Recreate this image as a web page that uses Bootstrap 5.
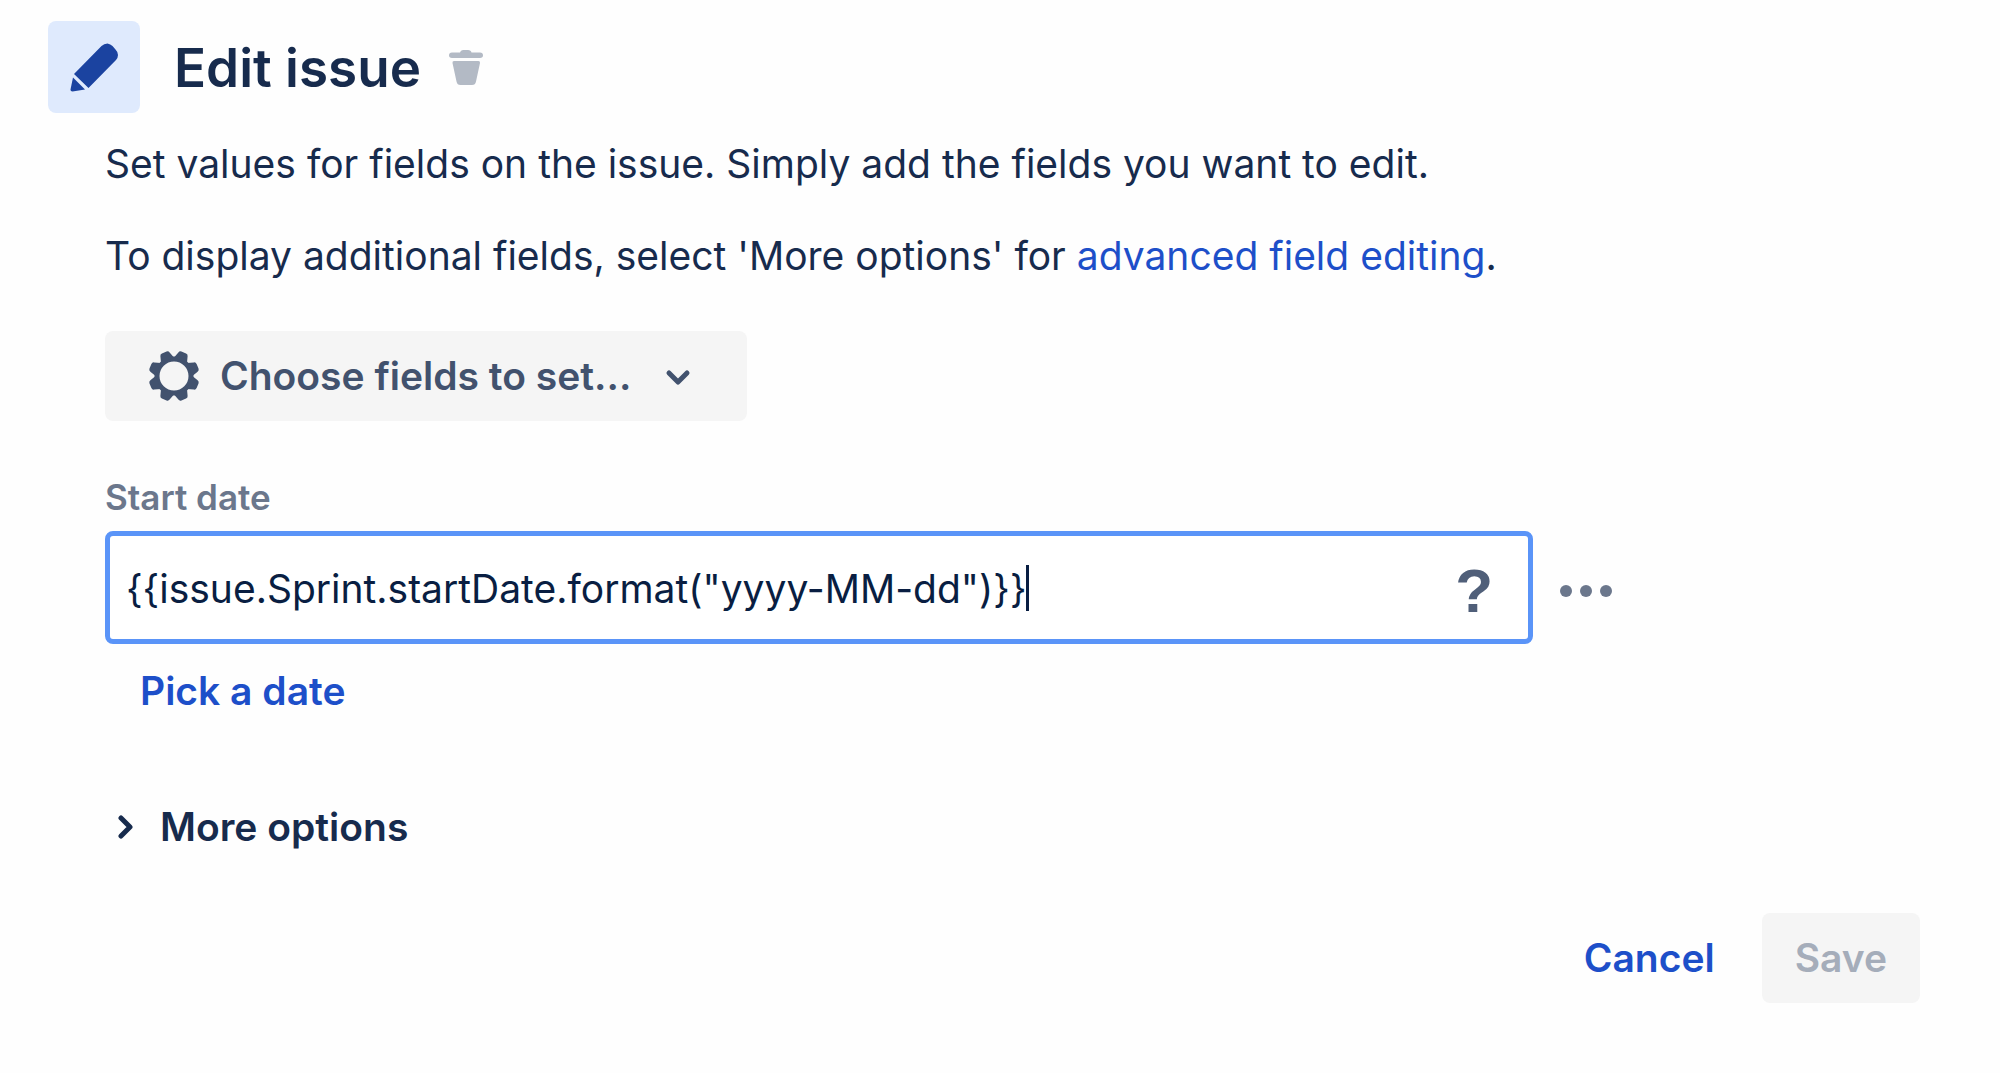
<!DOCTYPE html>
<html lang="en">
<head>
<meta charset="utf-8">
<meta name="viewport" content="width=device-width, initial-scale=1">
<title>Edit issue</title>
<link href="https://cdn.jsdelivr.net/npm/bootstrap@5.3.0/dist/css/bootstrap.min.css" rel="stylesheet">
<style>
  body { font-family: Inter, "Liberation Sans", sans-serif; font-size: 39px; line-height: 52px; color: #172b4d; background: #fefefe; }
  .panel { padding: 21px 80px 40px 48px; }
  .tile { width: 92px; height: 92px; border-radius: 8px; background: #dfeafd; }
  .title { font-size: 53px; line-height: 64px; font-weight: 600; margin: 2px 27px 0 34px; }
  .panel-body { padding: 25px 0 0 57px; }
  .panel-body p { margin-bottom: 40px; }
  a, .link-btn { color: #1d4fc9; text-decoration: none; }
  .btn { font-size: 39px; line-height: 52px; border: 0; border-radius: 8px; font-weight: 600; }
  .btn-soft, .btn-soft:disabled { background: #f5f5f5; color: #42526e; }
  .btn-soft:disabled { color: #a5adba; opacity: 1; }
  .choose { padding: 19px 56px 19px 43px; margin-top: 9px; }
  .choose-text { margin: 0 34px 0 20px; }
  .field-label { font-size: 35px; line-height: 40px; font-weight: 600; color: #6b778c; margin: 56px 0 14px; }
  .field-row { gap: 24px; padding-right: 305px; }
  .field-box { height: 113px; border: 5px solid #5a94f8; border-radius: 8px; padding: 0 35px 0 16px; background: #fff; }
  .field-input { width: 900px; min-width: 0; border: 0; outline: 0; padding: 2px 0 0; background: transparent; color: #091e42; }
  .caret-bar { width: 3px; height: 46px; background: #091e42; flex: none; }
  .help-btn { font: bold 62px/64px "Liberation Sans", Arial, sans-serif; color: #505f79; }
  .help-btn, .dots-btn { margin-top: 7px; }
  .pick { margin: 21px 0 0 35px; }
  .more { margin-top: 84px; color: #172b4d; gap: 26px; padding: 0 0 0 13px; }
  .actions { margin-top: 60px; gap: 47px; }
  .save { padding: 19px 33px; }
</style>
</head>
<body>
<main class="panel">
  <header class="d-flex align-items-center">
    <span class="tile d-flex align-items-center justify-content-center flex-shrink-0">
      <svg width="92" height="92" viewBox="0 0 92 92" fill="#1b43a0" aria-hidden="true">
        <path d="M26 53 L53.500 25 Q56 22.500 59.500 22.500 Q62.500 23 64.500 25 L67.500 28.500 Q70 31 70 34 Q70 36.500 68 39 L40.500 67 Z"/>
        <path d="M25 56.500 L37 68.500 L24.500 70.500 Q22.300 70.500 22.500 68.500 Z"/>
      </svg>
    </span>
    <h1 class="title">Edit issue</h1>
    <button type="button" class="btn p-0 d-flex" aria-label="Delete">
      <svg width="36" height="38" viewBox="0 0 36 38" fill="#b3bac5" aria-hidden="true">
        <path d="M12 4.500 Q12.500 2 15 2 H20 Q23 2 23.500 4.500 H32 Q35 4.800 35 7.300 Q35 10 32 10 H4 Q1 10 1 7.300 Q1 4.800 4 4.500 Z"/>
        <path d="M6 13 H30.500 Q32.300 13 32 15 L28 33.500 Q27.400 37 24 37 H12.500 Q9.200 37 8.500 33.500 L4.500 15 Q4.200 13 6 13 Z"/>
      </svg>
    </button>
  </header>

  <form class="panel-body">
    <p>Set values for fields on the issue. Simply add the fields you want to edit.</p>
    <p>To display additional fields, select 'More options' for <a href="#">advanced field editing</a>.</p>

    <button type="button" class="btn btn-soft choose d-inline-flex align-items-center" aria-expanded="false">
      <svg width="52" height="52" viewBox="-26 -26 52 52" fill="none" stroke="#42526e" aria-hidden="true">
        <circle r="17" stroke-width="5"/>
        <g fill="#42526e" stroke="none">
          <path id="tooth" d="M-7 -17 L-5 -23.500 Q-4.500 -25.500 -2.500 -25.500 L2.500 -25.500 Q4.500 -25.500 5 -23.500 L7 -17 Z" transform="rotate(22.500)"/>
          <use href="#tooth" transform="rotate(45)"/><use href="#tooth" transform="rotate(90)"/>
          <use href="#tooth" transform="rotate(135)"/><use href="#tooth" transform="rotate(180)"/>
          <use href="#tooth" transform="rotate(225)"/><use href="#tooth" transform="rotate(270)"/>
          <use href="#tooth" transform="rotate(315)"/>
        </g>
      </svg>
      <span class="choose-text">Choose fields to set...</span>
      <svg width="26" height="20" viewBox="0 0 26 20" fill="none" stroke="#42526e" stroke-width="5" stroke-linecap="round" stroke-linejoin="round" aria-hidden="true"><path d="M4 7 L13 16 L22 7"/></svg>
    </button>

    <label class="field-label d-block" for="start-date">Start date</label>
    <div class="field-row d-flex align-items-center">
      <div class="field-box d-flex align-items-center flex-grow-1">
        <input class="field-input" id="start-date" type="text" value='{{issue.Sprint.startDate.format("yyyy-MM-dd")}}'>
        <span class="caret-bar"></span>
        <button type="button" class="btn help-btn p-0 ms-auto" aria-label="Help">?</button>
      </div>
      <button type="button" class="btn dots-btn p-0 d-flex" aria-label="More actions">
        <svg width="58" height="16" viewBox="0 0 58 16" fill="#6b778c" aria-hidden="true"><circle cx="9" cy="8" r="6"/><circle cx="29" cy="8" r="6"/><circle cx="49" cy="8" r="6"/></svg>
      </button>
    </div>
    <button type="button" class="btn link-btn pick p-0 d-block">Pick a date</button>

    <button type="button" class="btn more d-flex align-items-center" aria-expanded="false">
      <svg width="16" height="26" viewBox="0 0 16 26" fill="none" stroke="#172b4d" stroke-width="5" stroke-linecap="round" stroke-linejoin="round" aria-hidden="true"><path d="M3 4 L12 13 L3 22"/></svg>
      More options
    </button>

    <div class="actions d-flex justify-content-end align-items-center">
      <button type="button" class="btn link-btn p-0">Cancel</button>
      <button type="submit" class="btn btn-soft save" disabled>Save</button>
    </div>
  </form>
</main>
<script src="https://cdn.jsdelivr.net/npm/bootstrap@5.3.0/dist/js/bootstrap.bundle.min.js"></script>
</body>
</html>
